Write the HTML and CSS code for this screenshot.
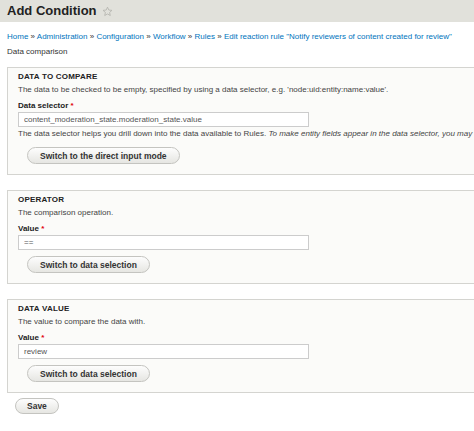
FILE: index.html
```html
<!DOCTYPE html>
<html lang="en">
<head>
    <meta charset="UTF-8">
    <title>Add Condition</title>
    <link rel="stylesheet" href="styles.css">
</head>
<body>
    <div class="page-header">
        <h1 class="page-title">Add Condition</h1>
        <svg class="shortcut-star" width="11" height="11" viewBox="0 0 24 24">
            <path d="M12 2.5l2.9 6.3 6.8.7-5.1 4.6 1.5 6.7L12 17.3l-6.1 3.5 1.5-6.7-5.1-4.6 6.8-.7z" fill="none" stroke="#b4b4ae" stroke-width="1.8" stroke-linejoin="round"/>
        </svg>
    </div>

    <div class="content">
        <div class="breadcrumb">
            <a href="#">Home</a> &raquo; <a href="#">Administration</a> &raquo; <a href="#">Configuration</a> &raquo; <a href="#">Workflow</a> &raquo; <a href="#">Rules</a> &raquo; <a href="#">Edit reaction rule "Notify reviewers of content created for review"</a>
        </div>
        <p class="subtitle">Data comparison</p>

        <div class="fieldset first">
            <div class="legend">Data to compare</div>
            <p class="description">The data to be checked to be empty, specified by using a data selector, e.g. 'node:uid:entity:name:value'.</p>
            <label class="form-label">Data selector <span class="required">*</span></label>
            <input type="text" class="form-text" value="content_moderation_state.moderation_state.value">
            <p class="description">The data selector helps you drill down into the data available to Rules. <em>To make entity fields appear in the data selector, you may have to use the condition 'entity has field'.</em></p>
            <button class="button">Switch to the direct input mode</button>
        </div>

        <div class="fieldset">
            <div class="legend">Operator</div>
            <p class="description">The comparison operation.</p>
            <label class="form-label">Value <span class="required">*</span></label>
            <input type="text" class="form-text" value="==">
            <button class="button">Switch to data selection</button>
        </div>

        <div class="fieldset">
            <div class="legend">Data value</div>
            <p class="description">The value to compare the data with.</p>
            <label class="form-label">Value <span class="required">*</span></label>
            <input type="text" class="form-text" value="review">
            <button class="button">Switch to data selection</button>
        </div>

        <button class="button save">Save</button>
    </div>
</body>
</html>
```

FILE: styles.css
```css
* {
    margin: 0;
    padding: 0;
    box-sizing: border-box;
}

html, body {
    overflow: hidden;
}

body {
    background: #fff;
    color: #333;
    font-family: "Liberation Sans", Arial, sans-serif;
    font-size: 8px;
    line-height: 12px;
}

.page-header {
    background: #e1e1db;
    height: 22px;
    padding-left: 7px;
    display: flex;
    align-items: center;
    gap: 5px;
}

.page-title {
    font-size: 13px;
    font-weight: bold;
    color: #222;
    line-height: 22px;
}

.shortcut-star {
    margin-top: 1px;
}

.content {
    padding: 9px 7px 0;
}

.breadcrumb {
    white-space: nowrap;
    line-height: 12px;
}

.breadcrumb a {
    color: #0074bd;
    text-decoration: none;
}

.subtitle {
    margin-top: 3px;
    color: #333;
}

.fieldset {
    width: 620px;
    margin-top: 9px;
    background: #fbfbf9;
    border: 1px solid #d4d4d0;
    padding: 0 10px 10px;
}

.fieldset + .fieldset {
    margin-top: 15px;
}

.legend {
    margin-top: 3px;
    font-weight: bold;
    text-transform: uppercase;
    letter-spacing: 0.2px;
    color: #222;
}

.description {
    margin-top: 1px;
    color: #444;
    white-space: nowrap;
}

.form-label {
    display: block;
    margin-top: 4px;
    font-weight: bold;
    color: #222;
}

.required {
    color: #e0000b;
}

.form-text {
    display: block;
    width: 291px;
    height: 15px;
    border: 1px solid #ccc;
    background: #fff;
    padding: 0 5px;
    font-family: inherit;
    font-size: 8px;
    color: #555;
}

.button {
    display: block;
    margin: 6px 0 0 9px;
    height: 17px;
    padding: 0 12px;
    border: 1px solid #c4c4c0;
    border-radius: 10px;
    background: linear-gradient(#fdfdfd, #e6e6e2);
    font-family: inherit;
    font-size: 8.5px;
    font-weight: bold;
    color: #333;
}

.first .button {
    margin-top: 7px;
}

.save {
    margin: 5px 0 0 8px;
    height: 16px;
    padding: 0 11px;
}
```
